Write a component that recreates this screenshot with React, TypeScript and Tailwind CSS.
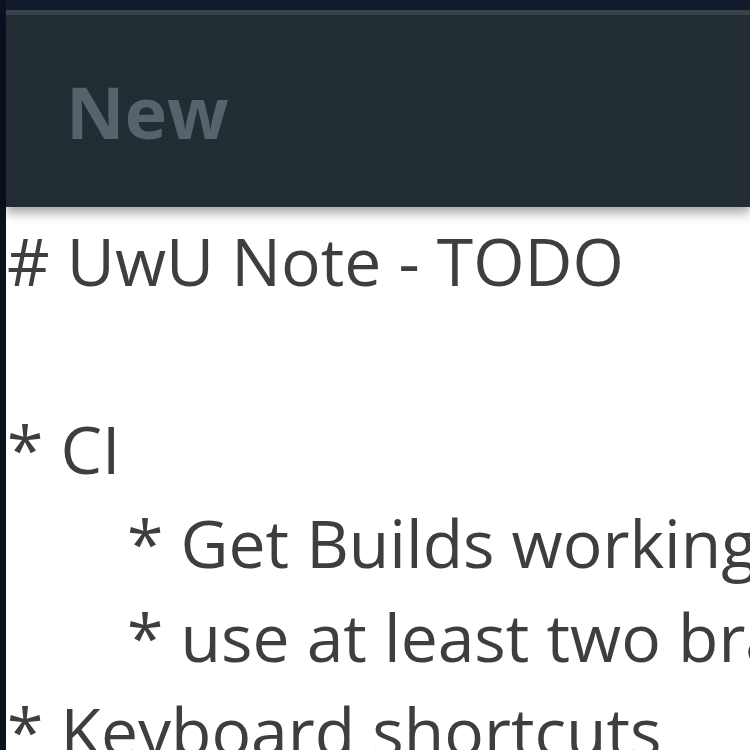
export default function App() {
  const font = { fontFamily: '"Open Sans", "Noto Sans", sans-serif' };

  return (
    <div className="flex h-[750px] w-[750px] overflow-hidden bg-[#0c1422]" style={font}>
      <div className="w-[6px] shrink-0 bg-[#0a1220]" />
      <div className="flex min-w-0 flex-1 flex-col">
        <div className="h-[10px] shrink-0 bg-[#111b2b]" />
        <div className="h-[5px] shrink-0 bg-[#3a444d]" />
        <div className="relative z-10 flex h-[192px] shrink-0 items-center bg-[#222c33] pl-[60px] shadow-[0_6px_10px_rgba(0,0,0,0.35)]">
          <span className="text-[72px] font-bold leading-none text-[#56626c]">New</span>
        </div>
        <div className="flex-1 whitespace-pre bg-white pl-[1px] pt-[6px] text-[66px] leading-[94px] text-[#3e3e3e]">
          <div># UwU Note - TODO</div>
          <div>&nbsp;</div>
          <div>* CI</div>
          <div className="pl-[120px]">* Get Builds working</div>
          <div className="pl-[120px]">* use at least two branches</div>
          <div>* Keyboard shortcuts</div>
        </div>
      </div>
    </div>
  );
}
